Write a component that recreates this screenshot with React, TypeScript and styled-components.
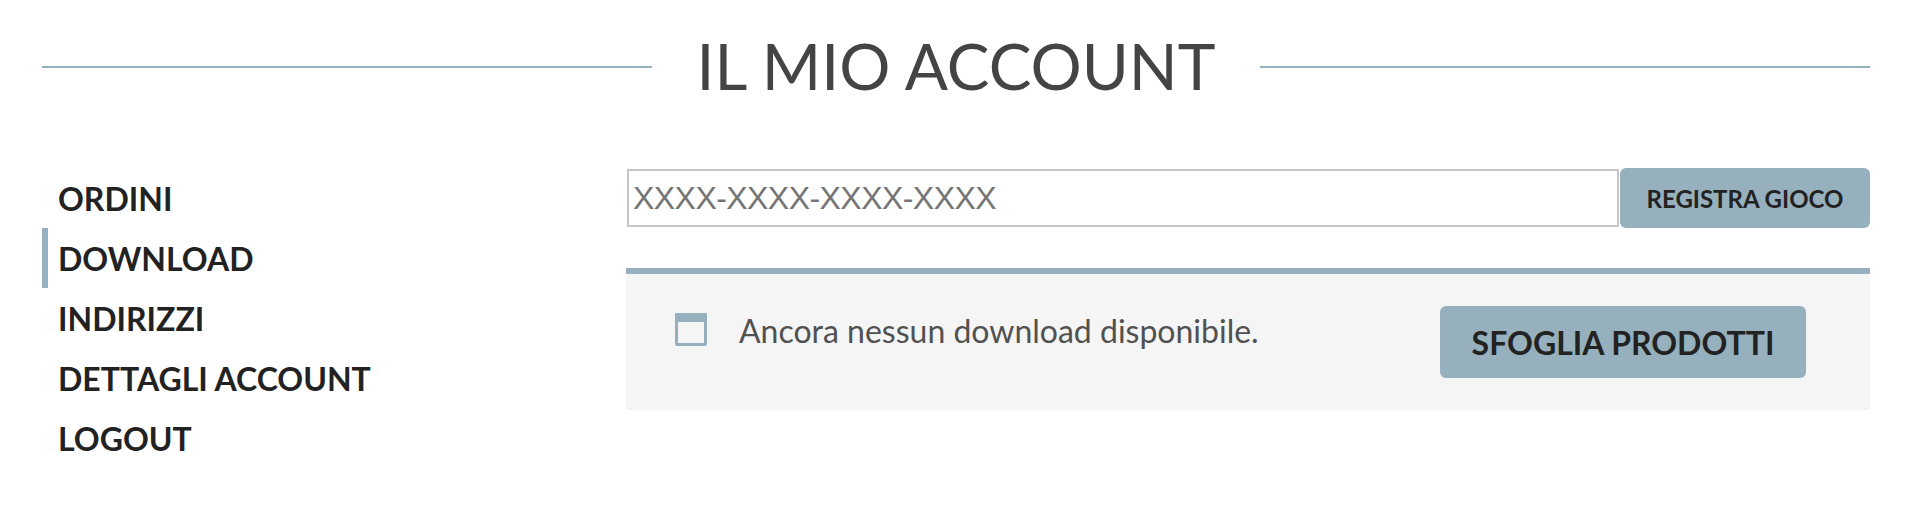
import React from 'react';
import styled, { createGlobalStyle } from 'styled-components';

const GlobalStyle = createGlobalStyle`
  html, body {
    margin: 0;
    padding: 0;
    background: #fff;
  }
  * {
    box-sizing: border-box;
  }
`;

const accent = '#96b0bd';

const Page = styled.div`
  width: 1920px;
  height: 514px;
  padding: 0 50px 0 42px;
  font-family: Lato, sans-serif;
  color: #222;
  overflow: hidden;
`;

const Header = styled.header`
  display: flex;
  align-items: center;
  height: 134px;
  margin-bottom: 34px;
`;

const HeaderLine = styled.div`
  flex: 1;
  height: 2px;
  background: ${accent};
`;

const Title = styled.h1`
  margin: -2px 0 0;
  padding: 0 45px;
  font-size: 64px;
  font-weight: 400;
  color: #444;
  line-height: 1;
`;

const Content = styled.div`
  display: flex;
`;

const Nav = styled.nav`
  display: flex;
  flex-direction: column;
  width: 584px;
`;

const NavItem = styled.a<{ $active?: boolean }>`
  display: flex;
  align-items: center;
  height: 60px;
  padding-left: ${(p) => (p.$active ? 10 : 16)}px;
  border-left: ${(p) => (p.$active ? `6px solid ${accent}` : 'none')};
  font-size: 32px;
  font-weight: 700;
  color: #222;
`;

const Main = styled.main`
  flex: 1;
  min-width: 0;
`;

const RegisterForm = styled.form`
  display: flex;
  align-items: center;
  height: 60px;
  margin-bottom: 40px;
`;

const CodeInput = styled.input`
  flex: 1;
  height: 58px;
  margin: 0 1px;
  padding: 0 4px;
  border: 2px solid #c6c6c6;
  background: #fff;
  font-family: 'Liberation Sans', Arial, sans-serif;
  font-size: 32px;
  letter-spacing: -0.55px;
  color: #757575;

  &::placeholder {
    color: #757575;
    opacity: 1;
  }
`;

const Button = styled.button<{ $large?: boolean }>`
  flex: none;
  border: none;
  border-radius: 6px;
  background: ${accent};
  color: #222;
  font-family: Lato, sans-serif;
  font-weight: 700;
  font-size: ${(p) => (p.$large ? 32 : 24)}px;
  width: ${(p) => (p.$large ? 366 : 250)}px;
  height: ${(p) => (p.$large ? 72 : 60)}px;
  padding: 0;
`;

const Notice = styled.div`
  display: flex;
  justify-content: space-between;
  border-top: 6px solid ${accent};
  background: #f5f5f5;
  padding: 32px 64px 32px 49px;
`;

const Message = styled.div`
  display: flex;
  align-items: flex-start;
  gap: 32px;
  padding-top: 7px;
  font-size: 32px;
  line-height: 36px;
  color: #515151;
`;

const IconSvg = styled.svg`
  flex: none;
`;

const WindowIcon = () => (
  <IconSvg width="32" height="33" viewBox="0 0 32 33">
    <rect x="1.5" y="1.5" width="29" height="30" rx="0.5" fill="none" stroke={accent} strokeWidth="3" />
    <rect width="32" height="9" rx="1" fill={accent} />
  </IconSvg>
);

const links = [
  { label: 'ORDINI' },
  { label: 'DOWNLOAD', active: true },
  { label: 'INDIRIZZI' },
  { label: 'DETTAGLI ACCOUNT' },
  { label: 'LOGOUT' },
];

const App: React.FC = () => {
  return (
    <Page>
      <GlobalStyle />
      <Header>
        <HeaderLine />
        <Title>IL MIO ACCOUNT</Title>
        <HeaderLine />
      </Header>
      <Content>
        <Nav>
          {links.map((link) => (
            <NavItem key={link.label} $active={link.active}>
              {link.label}
            </NavItem>
          ))}
        </Nav>
        <Main>
          <RegisterForm>
            <CodeInput placeholder="XXXX-XXXX-XXXX-XXXX" />
            <Button type="button">REGISTRA GIOCO</Button>
          </RegisterForm>
          <Notice>
            <Message>
              <WindowIcon />
              <span>Ancora nessun download disponibile.</span>
            </Message>
            <Button type="button" $large>
              SFOGLIA PRODOTTI
            </Button>
          </Notice>
        </Main>
      </Content>
    </Page>
  );
};

export default App;
